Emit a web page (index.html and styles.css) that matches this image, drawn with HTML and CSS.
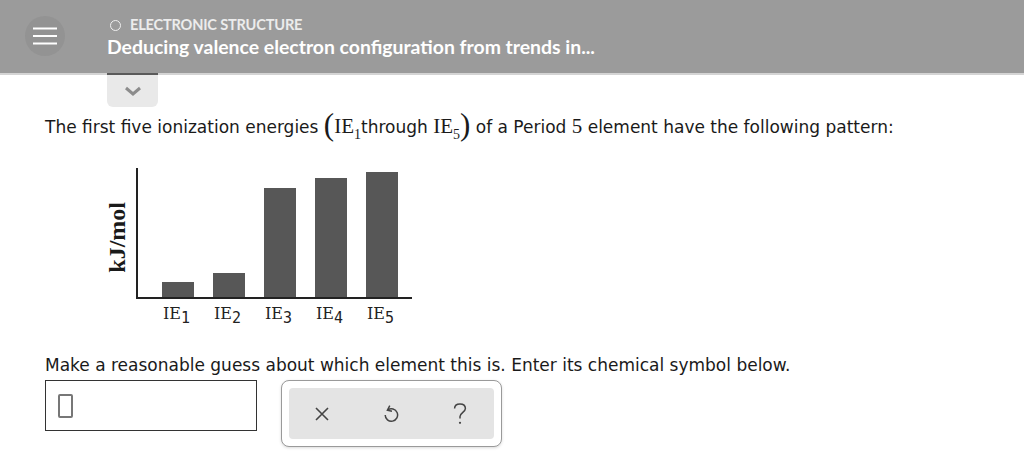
FILE: index.html
```html
<!DOCTYPE html>
<html>
<head>
<meta charset="utf-8">
<link rel="stylesheet" href="styles.css">
</head>
<body>
<header class="topbar">
  <div class="menu-btn">
    <svg width="24" height="18" viewBox="0 0 24 18"><path d="M0 1.5H24M0 9H24M0 16.5H24" stroke="#fff" stroke-width="2"/></svg>
  </div>
  <div class="titles">
    <div class="subtitle"><span class="ring"></span>ELECTRONIC STRUCTURE</div>
    <div class="title">Deducing valence electron configuration from trends in...</div>
  </div>
</header>
<div class="tab">
  <svg width="18" height="10" viewBox="0 0 18 10"><path d="M2 2L9 8L16 2" fill="none" stroke="#8c8c8c" stroke-width="3"/></svg>
</div>
<main class="content">
  <p class="q1">The first five ionization energies <span class="math"><span class="paren">(</span>IE<sub>1</sub><span class="txt">through </span>IE<sub>5</sub><span class="paren">)</span></span> of a Period <span class="num">5</span> element have the following pattern:</p>
  <div class="figure">
    <div class="ylabel">kJ/mol</div>
    <div class="plot">
      <div class="bars">
        <div class="bar" style="height:15px"></div>
        <div class="bar" style="height:24px"></div>
        <div class="bar" style="height:109px"></div>
        <div class="bar" style="height:119px"></div>
        <div class="bar" style="height:125px"></div>
      </div>
      <div class="labels">
        <span>IE<sub>1</sub></span>
        <span>IE<sub>2</sub></span>
        <span>IE<sub>3</sub></span>
        <span>IE<sub>4</sub></span>
        <span>IE<sub>5</sub></span>
      </div>
    </div>
  </div>
  <p class="q2">Make a reasonable guess about which element this is. Enter its chemical symbol below.</p>
  <div class="answer-row">
    <div class="answer-box"><span class="caret"></span></div>
    <div class="tools">
      <div class="tools-inner">
        <svg class="ic" width="16" height="16" viewBox="0 0 16 16"><path d="M2 2L14 14M14 2L2 14" stroke="#444" stroke-width="1.6" fill="none"/></svg>
        <svg class="ic" width="16" height="22" viewBox="0 0 16 22"><path d="M4.8 7A6.2 6.2 0 1 1 2.2 12" fill="none" stroke="#444" stroke-width="1.5"/><path d="M6.8 2.6L4.4 7.2L9 8.2" fill="none" stroke="#444" stroke-width="1.5"/></svg>
        <svg class="ic" width="16" height="24" viewBox="0 0 16 24"><path d="M2.6 6.6C2.6 3.4 5 2 8 2C11 2 13.4 3.6 13.4 6.6C13.4 10.2 8 10.6 8 14.6V16.4" fill="none" stroke="#444" stroke-width="1.5"/><circle cx="8" cy="20.8" r="1.1" fill="#444"/></svg>
      </div>
    </div>
  </div>
</main>
</body>
</html>
```

FILE: styles.css
```css
html, body {
  margin: 0;
  padding: 0;
  background: #fff;
}
body {
  font-family: "DejaVu Sans", Verdana, sans-serif;
  color: #1a1a1a;
  width: 1024px;
  height: 455px;
  overflow: hidden;
}
.topbar {
  height: 73px;
  background: #9b9b9b;
  border-bottom: 2px solid #d4d4d4;
  display: flex;
  align-items: center;
  box-sizing: content-box;
}
.menu-btn {
  width: 40px;
  height: 40px;
  border-radius: 50%;
  background: #939393;
  margin-left: 25px;
  margin-top: -2px;
  display: flex;
  align-items: center;
  justify-content: center;
}
.titles {
  margin-left: 42px;
  display: flex;
  flex-direction: column;
  margin-top: 2px;
}
.subtitle {
  font-family: Lato, "Open Sans", sans-serif;
  font-weight: 700;
  font-size: 14.6px;
  line-height: 18px;
  color: #ececec;
  display: flex;
  align-items: center;
  margin-left: 3px;
  letter-spacing: -0.2px;
}
.ring {
  width: 9px;
  height: 9px;
  border: 1.5px solid #f0f0f0;
  border-radius: 50%;
  margin-right: 9px;
}
.title {
  font-family: Lato, "Open Sans", sans-serif;
  font-weight: 700;
  font-size: 19.4px;
  line-height: 24px;
  color: #fff;
  margin-top: 1px;
}
.tab {
  width: 51px;
  height: 32px;
  margin-left: 107px;
  margin-top: -2px;
  border-top: 2px solid #5a5a5a;
  background: #e9e9e9;
  border-radius: 0 0 6px 6px;
  display: flex;
  align-items: center;
  justify-content: center;
}
.content {
  padding-left: 45px;
}
.q1 {
  margin: 4px 0 0;
  font-size: 17px;
  line-height: 30px;
  height: 30px;
  white-space: nowrap;
}
.math {
  font-family: "Liberation Serif", "Times New Roman", serif;
  font-size: 21px;
}
.math sub {
  font-size: 14px;
  vertical-align: -6px;
  line-height: 0;
}
.math .txt {
  font-family: "DejaVu Sans", Verdana, sans-serif;
  font-size: 17px;
}
.paren {
  font-size: 31px;
  line-height: 0;
  vertical-align: -2px;
}
.num {
  font-family: "Liberation Serif", "Times New Roman", serif;
  font-size: 21px;
}
.figure {
  display: flex;
  align-items: flex-start;
  margin-top: 27px;
}
.ylabel {
  writing-mode: vertical-rl;
  transform: rotate(180deg);
  font-family: "Liberation Serif", "Times New Roman", serif;
  font-weight: 700;
  font-size: 24px;
  margin-left: 61px;
  margin-top: 34px;
  line-height: 22px;
}
.plot {
  margin-left: 8px;
  display: flex;
  flex-direction: column;
}
.bars {
  width: 250px;
  height: 129px;
  border-left: 2px solid #222;
  border-bottom: 2px solid #222;
  display: flex;
  align-items: flex-end;
  gap: 19px;
  padding-left: 24px;
  box-sizing: content-box;
}
.bar {
  width: 32px;
  background: #575757;
}
.labels {
  display: flex;
  gap: 15px;
  padding-left: 27px;
  margin-top: 5px;
  font-family: "DejaVu Serif", "Liberation Serif", serif;
  font-size: 16px;
  line-height: 20px;
  color: #222;
}
.labels span {
  width: 36px;
}
.labels sub {
  font-family: "DejaVu Sans Mono", "DejaVu Sans", sans-serif;
  font-size: 15px;
  vertical-align: -4px;
  line-height: 0;
}
.q2 {
  margin: 30px 0 0;
  font-size: 17px;
  line-height: 22px;
}
.answer-row {
  display: flex;
  align-items: flex-start;
  margin-top: 4px;
}
.answer-box {
  width: 210px;
  height: 49px;
  border: 1px solid #333;
  display: flex;
  align-items: center;
}
.caret {
  width: 11px;
  height: 20px;
  border: 2px solid #777;
  border-radius: 2px;
  margin-left: 12px;
}
.tools {
  margin-left: 24px;
  width: 205px;
  height: 51px;
  padding: 7px;
  border: 1px solid #9a9a9a;
  border-radius: 8px;
  background: #fff;
  box-shadow: 0 1px 3px rgba(0,0,0,0.15);
}
.tools-inner {
  height: 100%;
  background: #e4e4e4;
  border-radius: 4px;
  display: flex;
  align-items: center;
  gap: 53px;
  padding-left: 25px;
}
```
